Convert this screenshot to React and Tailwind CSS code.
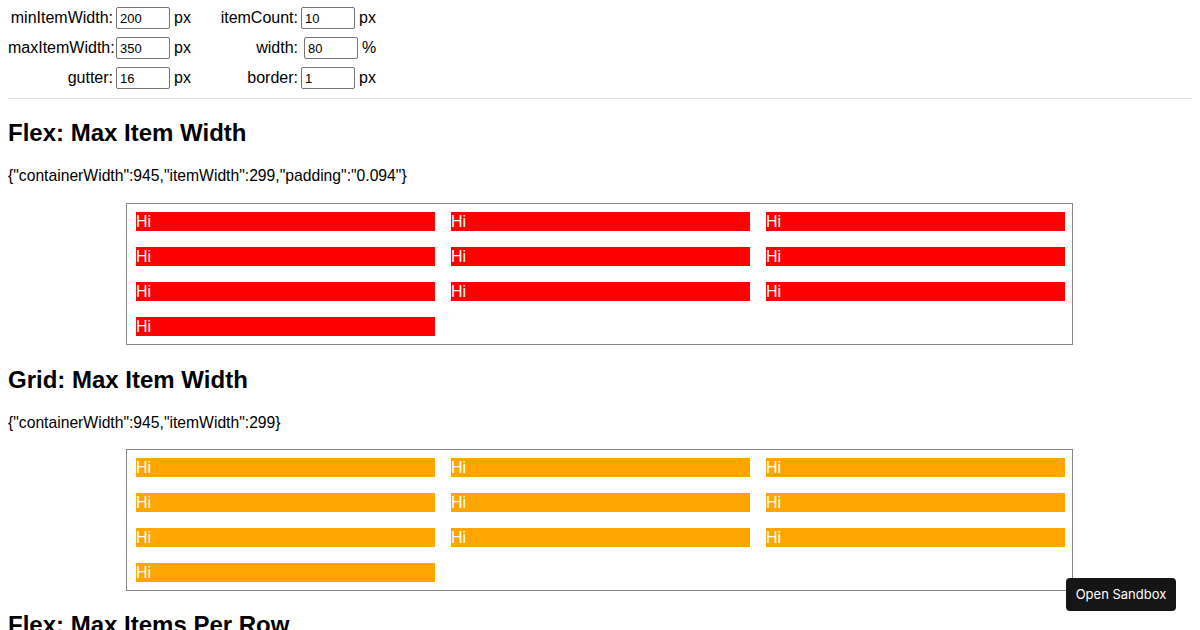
import React from 'react';

const fields = [
  [
    { label: 'minItemWidth:', value: '200', unit: 'px' },
    { label: 'itemCount:', value: '10', unit: 'px' },
  ],
  [
    { label: 'maxItemWidth:', value: '350', unit: 'px' },
    { label: 'width:', value: '80', unit: '%', shift: true },
  ],
  [
    { label: 'gutter:', value: '16', unit: 'px' },
    { label: 'border:', value: '1', unit: 'px' },
  ],
];

const NumberInput = ({ value, shift }) => (
  <input
    type="text"
    defaultValue={value}
    className={`${shift ? 'ml-[6px]' : 'ml-[3px]'} w-[54px] h-[22px] border border-[#767676] rounded-[2px] px-[3px] text-[13px] text-black bg-white outline-none`}
  />
);

const Controls = () => (
  <div className="flex flex-col">
    {fields.map((row, i) => (
      <div key={i} className="flex items-center h-[30px]">
        <span className="w-[105px] text-right">{row[0].label}</span>
        <NumberInput value={row[0].value} />
        <span className="ml-[4px] w-[40px]">{row[0].unit}</span>
        <span className="w-[84px] text-right">{row[1].label}</span>
        <NumberInput value={row[1].value} shift={row[1].shift} />
        <span className="ml-[4px]">{row[1].unit}</span>
      </div>
    ))}
  </div>
);

const items = Array.from({ length: 10 });

const Section = ({ title, info, color, top, gap }) => (
  <section>
    <h2 className={`${top} text-[24px] leading-[28px] font-bold`}>{title}</h2>
    <p className="mt-[20px] leading-[18px] text-[15.7px]">{info}</p>
    <div className={`${gap} ml-[118px] w-[947px] border border-[#888888] pl-[9px] pr-[7px] py-[8px]`}>
      <div className="flex flex-wrap gap-[16px]">
        {items.map((_, i) => (
          <div
            key={i}
            className={`${color} w-[299px] h-[19px] leading-[19px] text-white`}
          >
            Hi
          </div>
        ))}
      </div>
    </div>
  </section>
);

export default function App() {
  return (
    <div
      className="relative min-h-screen bg-white text-black text-[16px] px-2 pt-[3px] pb-10"
      style={{ fontFamily: '"Liberation Sans", Arial, sans-serif' }}
    >
      <Controls />
      <hr className="mt-[5px] border-0 border-t border-[#dddddd]" />

      <Section
        title="Flex: Max Item Width"
        info={'{"containerWidth":945,"itemWidth":299,"padding":"0.094"}'}
        color="bg-[#ff0000]"
        top="mt-[20px]"
        gap="mt-[18px]"
      />
      <Section
        title="Grid: Max Item Width"
        info={'{"containerWidth":945,"itemWidth":299}'}
        color="bg-[#ffa500]"
        top="mt-[21px]"
        gap="mt-[17px]"
      />

      <h2 className="mt-[20px] text-[24px] leading-[28px] font-bold">Flex: Max Items Per Row</h2>
      <p className="mt-[20px] leading-[18px] text-[15.7px]">{'{"containerWidth":945,"itemWidth":299}'}</p>

      <button
        type="button"
        className="fixed right-[24px] bottom-[19px] w-[110px] h-[33px] rounded-[4px] bg-[#151515] text-white text-[13px]"
        style={{ fontFamily: 'Inter, "Liberation Sans", sans-serif' }}
      >
        Open Sandbox
      </button>
    </div>
  );
}
